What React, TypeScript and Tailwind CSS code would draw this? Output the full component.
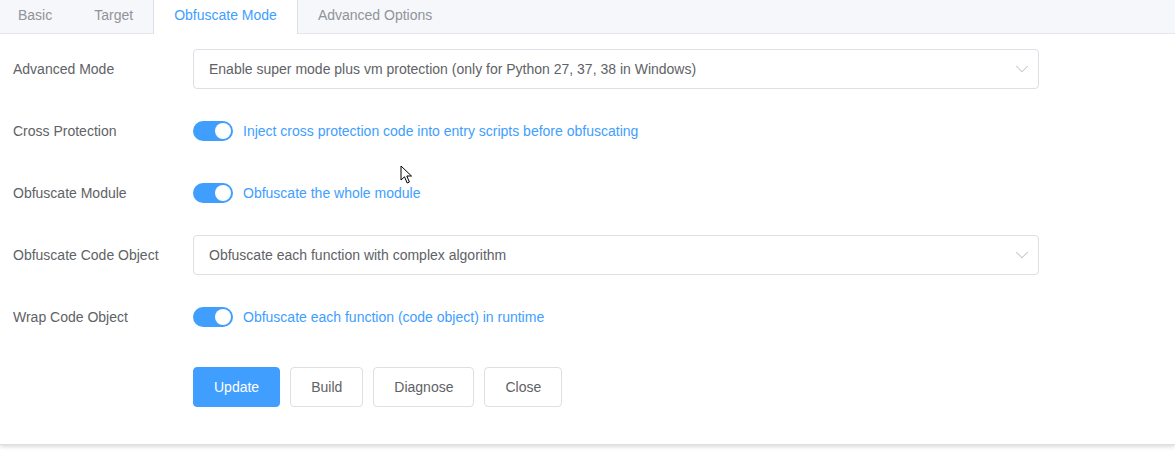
import { ChevronDown } from "lucide-react";

const TABS = ["Basic", "Target", "Obfuscate Mode", "Advanced Options"];
const ACTIVE = "Obfuscate Mode";

function Select({ value }: { value: string }) {
  return (
    <div className="flex h-10 w-[846px] items-center justify-between rounded border border-[#dcdfe6] bg-white pl-[15px] pr-[5px]">
      <span className="text-sm text-[#606266]">{value}</span>
      <ChevronDown className="h-[22px] w-[22px] text-[#c0c4cc]" strokeWidth={1.1} />
    </div>
  );
}

function Switch({ label }: { label: string }) {
  return (
    <div className="flex h-10 items-center">
      <span className="relative h-5 w-10 rounded-full bg-[#409eff]">
        <span className="absolute right-[2px] top-[2px] h-4 w-4 rounded-full bg-white" />
      </span>
      <span className="ml-[10px] text-sm text-[#409eff]">{label}</span>
    </div>
  );
}

function Row({ label, children }: { label: string; children?: React.ReactNode }) {
  return (
    <div className="mb-[22px] flex">
      <label className="w-[180px] text-sm leading-10 text-[#606266]">{label}</label>
      <div>{children}</div>
    </div>
  );
}

function Cursor() {
  return (
    <svg className="pointer-events-none absolute left-[400px] top-[165px]" width="14" height="20" viewBox="0 0 14 20">
      <path d="M1 1 L1 15 L4.5 11.8 L7.2 18 L9.4 17 L6.8 11 L11.5 11 Z" fill="white" stroke="black" strokeWidth="1" strokeLinejoin="round" />
    </svg>
  );
}

export default function App() {
  return (
    <div className="relative h-[460px] w-[1175px] bg-white" style={{ fontFamily: '"Liberation Sans", Arial, sans-serif' }}>
      <div className="border-b border-[#dcdfe6] bg-white shadow-[0_2px_4px_rgba(0,0,0,0.12),0_0_6px_rgba(0,0,0,0.04)]">
        {/* Tabs header */}
        <div className="flex h-[34px] border-b border-[#e4e7ed] bg-[#f5f7fa]">
          {TABS.map((t, i) => {
            const active = t === ACTIVE;
            return (
              <div
                key={t}
                className={`-mb-px flex h-[34px] items-center border-x pb-[5px] text-sm ${i === 0 ? "pl-[18px] pr-5 border-l-0" : "px-5"} ${
                  active ? "border-[#dcdfe6] bg-white text-[#409eff]" : "border-transparent text-[#909399]"
                } ${i > 1 ? "-ml-px" : ""}`}
              >
                {t}
              </div>
            );
          })}
        </div>

        {/* Form */}
        <div className="pb-[15px] pl-[13px] pt-[15px]">
          <Row label="Advanced Mode">
            <Select value="Enable super mode plus vm protection (only for Python 27, 37, 38 in Windows)" />
          </Row>
          <Row label="Cross Protection">
            <Switch label="Inject cross protection code into entry scripts before obfuscating" />
          </Row>
          <Row label="Obfuscate Module">
            <Switch label="Obfuscate the whole module" />
          </Row>
          <Row label="Obfuscate Code Object">
            <Select value="Obfuscate each function with complex algorithm" />
          </Row>
          <Row label="Wrap Code Object">
            <Switch label="Obfuscate each function (code object) in runtime" />
          </Row>
          <div className="mb-[22px] flex pl-[180px] pt-2">
            <div className="flex gap-[10px]">
              <button className="h-10 rounded border border-[#409eff] bg-[#409eff] px-5 text-sm text-white">Update</button>
              <button className="h-10 rounded border border-[#dcdfe6] bg-white px-5 text-sm text-[#606266]">Build</button>
              <button className="h-10 rounded border border-[#dcdfe6] bg-white px-5 text-sm text-[#606266]">Diagnose</button>
              <button className="h-10 rounded border border-[#dcdfe6] bg-white px-5 text-sm text-[#606266]">Close</button>
            </div>
          </div>
        </div>
      </div>
      <Cursor />
    </div>
  );
}
